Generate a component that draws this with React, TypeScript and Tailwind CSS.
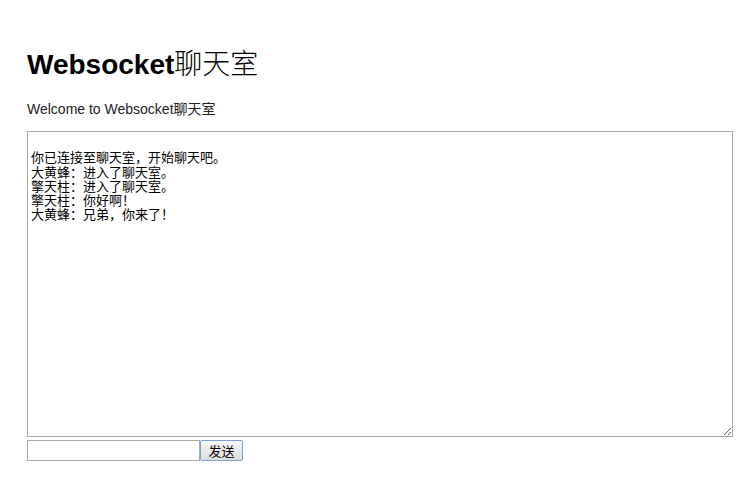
import * as React from "react";

const messages = [
  "",
  "你已连接至聊天室，开始聊天吧。",
  "大黄蜂：进入了聊天室。",
  "擎天柱：进入了聊天室。",
  "擎天柱：你好啊！",
  "大黄蜂：兄弟，你来了！",
];

export default function App() {
  return (
    <div className="min-h-[500px] w-[750px] bg-white pl-[27px] pt-[49px] text-black" style={{ fontFamily: '"Liberation Sans", "Noto Sans CJK SC", sans-serif' }}>
      <h1 className="m-0 text-[28px] font-bold leading-[32px]">
        Websocket<span className="font-light">聊天室</span>
      </h1>
      <p className="mt-[20px] text-[14px] leading-[16px] text-[#222]">Welcome to Websocket聊天室</p>
      <div className="mt-[14px]">
        <textarea
          readOnly
          value={messages.join("\n")}
          className="block h-[306px] w-[706px] resize border border-[#a9a9a9] px-[3px] pt-[4px] pb-[2px] text-[13px] leading-[14.3px] text-black outline-none"
          style={{ fontFamily: '"Noto Sans CJK SC", monospace' }}
        />
      </div>
      <div className="mt-[3px] flex items-center">
        <input type="text" className="h-[21px] w-[173px] border border-[#a9a9a9] px-[2px] text-[13px] outline-none" />
        <button className="h-[21px] w-[43px] rounded-[2px] border border-[#7da2ce] bg-gradient-to-b from-[#f6f6f6] to-[#dedede] text-[13px] leading-none text-black" style={{ fontFamily: '"Noto Sans CJK SC", sans-serif' }}>
          发送
        </button>
      </div>
    </div>
  );
}
